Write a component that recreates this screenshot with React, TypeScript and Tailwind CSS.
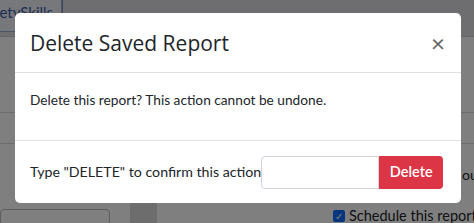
import React from "react";

const font = { fontFamily: 'Lato, "Liberation Sans", sans-serif' };

function PageBehind() {
  return (
    <div className="absolute inset-0 bg-white">
      <div className="flex h-[37px] border-b border-[#c8ccd2] bg-[#dcdde2]">
        <div className="flex h-[32px] w-[62px] items-start overflow-hidden border border-t-0 border-l-0 border-[#9aa8c8] bg-[#eef0f6] pt-[1px] text-[15px] text-[#3d5ea8]">
          <span className="-ml-[21px] whitespace-nowrap">SafetySkills</span>
        </div>
        <div className="w-[1px] bg-[#7d8fb8]" />
      </div>
      <div className="flex flex-col">
        <div className="h-[76px] border-b border-[#d8d8d8]" />
        <div className="h-[31px] border-b border-[#d8d8d8]" />
      </div>
      <div className="absolute left-[462px] top-[164px] text-[14px] text-[#212529]">ou</div>
      <div className="absolute left-0 top-[209px] h-[20px] w-[110px] rounded-sm border border-[#bbb]" />
      <div className="absolute left-[130px] top-[203px] h-[20px] w-[27px] bg-[#dadada]" />
      <div className="absolute left-[333px] top-[207px] flex items-center gap-[4px] whitespace-nowrap text-[14.5px] leading-[18px] text-[#212529]">
        <span className="flex h-[12px] w-[12px] items-center justify-center rounded-[2px] bg-[#0d6efd] text-[10px] leading-none text-white">✓</span>
        Schedule this report
      </div>
    </div>
  );
}

export default function App() {
  return (
    <div className="relative h-[223px] w-[474px] overflow-hidden" style={font}>
      <PageBehind />
      <div className="absolute inset-0 bg-black/50" />
      <div className="absolute left-[15px] top-[13px] flex w-[446px] flex-col rounded-[5px] bg-white text-[#212529]">
        <div className="flex h-[60px] items-center justify-between border-b border-[#dee2e6] px-[15px]">
          <h5 className="text-[21px] font-medium leading-[30px]" style={{ fontFamily: '"Open Sans", sans-serif' }}>
            Delete Saved Report
          </h5>
          <button className="pr-[1px] text-[24px] leading-none text-[#666]">×</button>
        </div>
        <div className="flex h-[67px] items-start px-[15px] pt-[15px]">
          <p className="text-[13.7px] leading-[24px]">Delete this report? This action cannot be undone.</p>
        </div>
        <div className="flex h-[63px] items-center border-t border-[#dee2e6] px-[15px]">
          <span className="whitespace-nowrap text-[14.2px] leading-[24px]">Type "DELETE" to confirm this action</span>
          <div className="ml-auto mr-[20px] flex shrink-0">
            <input className="h-[33px] w-[118px] rounded-l-[4px] border border-[#ced4da] px-2 text-[14px] outline-none" />
            <button className="h-[33px] w-[64px] rounded-r-[4px] bg-[#dc3545] text-[14.5px] font-semibold text-white">Delete</button>
          </div>
        </div>
      </div>
    </div>
  );
}
